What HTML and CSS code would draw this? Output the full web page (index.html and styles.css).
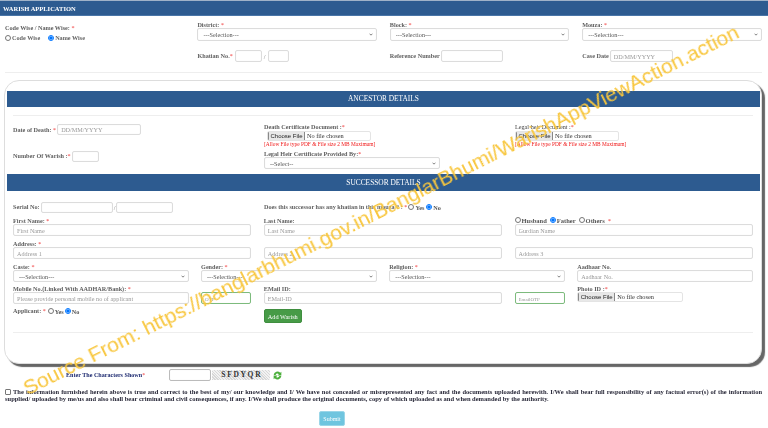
FILE: index.html
```html
<!DOCTYPE html>
<html lang="en">
<head>
<meta charset="utf-8">
<title>Warish Application</title>
<link rel="stylesheet" href="styles.css">
</head>
<body>
<div class="page">
  <div class="form-wrap">
    <header class="app-bar">WARISH APPLICATION</header>
    <section class="top-grid">
      <div class="field">
        <label>Code Wise / Name Wise: <i>*</i></label>
        <div class="radios top-radios">
          <input type="radio" name="mode"><span>Code Wise</span>
          <input type="radio" name="mode" checked class="gap-left"><span>Name Wise</span>
        </div>
      </div>
      <div class="field"><label>District: <i>*</i></label><select><option>---Selection---</option></select></div>
      <div class="field"><label>Block: <i>*</i></label><select><option>---Selection---</option></select></div>
      <div class="field"><label>Mouza: <i>*</i></label><select><option>---Selection---</option></select></div>
      <div></div>
      <div class="inline"><label>Khatian No.<i>*</i></label><input class="w-khatian1" type="text"><span class="sep">/</span><input class="w-khatian2" type="text"></div>
      <div class="inline"><label>Reference Number</label><input class="w-ref" type="text"></div>
      <div class="inline"><label>Case Date</label><input class="w-date" type="text" placeholder="DD/MM/YYYY"></div>
    </section>
    <hr class="rule top-rule">

    <section class="card">
      <h2 class="bar">ANCESTOR DETAILS</h2>
      <hr class="rule inner-rule">
      <div class="ancestor-grid">
        <div class="inline date-death"><label>Date of Death: <i>*</i></label><input class="w-death" type="text" placeholder="DD/MM/YYYY"></div>
        <div class="doc doc-indent">
          <label>Death Certificate Document :<i>*</i></label>
          <input type="file">
          <small>[Allow File type PDF &amp; File size 2 MB Maximum]</small>
        </div>
        <div class="doc">
          <label class="plain">Legal heir Document :<i>*</i></label>
          <input type="file">
          <small>[Allow File type PDF &amp; File size 2 MB Maximum]</small>
        </div>
        <div class="inline warish-count"><label>Number Of Warish :<i>*</i></label><input class="w-count" type="text"></div>
        <div class="field heir-select"><label>Legal Heir Certificate Provided By:<i>*</i></label><select><option>--Select--</option></select></div>
      </div>

      <h2 class="bar bar-second">SUCCESSOR DETAILS</h2>
      <div class="serial-row">
        <div class="inline"><label>Serial No:</label><input class="w-serial1" type="text"><span class="sep sep-tight">/</span><input class="w-serial2" type="text"></div>
        <div class="inline khatian-q">
          <label>Does this successor has any khatian in this mouza ? : <i>*</i></label>
          <input type="radio" name="has"><b>Yes</b><input type="radio" name="has" checked><b>No</b>
        </div>
      </div>
      <div class="succ-grid">
        <div class="field s4"><label>First Name: <i>*</i></label><input type="text" placeholder="First Name"></div>
        <div class="field s4"><label>Last Name:</label><input type="text" placeholder="Last Name"></div>
        <div class="field s4">
          <div class="radios guardian">
            <input type="radio" name="g"><b>Husband</b><input type="radio" name="g" checked><b>Father</b><input type="radio" name="g"><b>Others</b><i>*</i>
          </div>
          <input type="text" placeholder="Gurdian Name">
        </div>

        <div class="field s4"><label>Address: <i>*</i></label><input type="text" placeholder="Address 1"></div>
        <div class="field s4"><input type="text" placeholder="Address 2"></div>
        <div class="field s4"><input type="text" placeholder="Address 3"></div>

        <div class="field s3"><label>Caste: <i>*</i></label><select><option>---Selection---</option></select></div>
        <div class="field s3"><label>Gender: <i>*</i></label><select><option>---Selection---</option></select></div>
        <div class="field s3"><label>Religion: <i>*</i></label><select><option>---Selection---</option></select></div>
        <div class="field s3"><label>Aadhaar No.</label><input type="text" placeholder="Aadhaar No."></div>

        <div class="field s3"><label>Mobile No.(Linked With AADHAR/Bank): <i>*</i></label><input type="text" placeholder="Please provide personal mobile no of applicant"></div>
        <div class="field s1"><input class="otp" type="text" placeholder="OTP"></div>
        <div class="field s4"><label>EMail ID:</label><input type="text" placeholder="EMail-ID"></div>
        <div class="field s1"><input class="otp" type="text" placeholder="EmailOTP"></div>
        <div class="field s3 photo"><label>Photo ID :<i>*</i></label><input type="file"></div>

        <div class="radios applicant s4"><label>Applicant: <i>*</i></label><input type="radio" name="ap"><span>Yes</span><input type="radio" name="ap" checked><span>No</span></div>
        <div class="s8"><button class="add-btn" type="button">Add Warish</button></div>
      </div>
      <hr class="rule bottom-rule">
    </section>

    <div class="captcha-row">
      <label class="captcha-label">Enter The Characters Shown<i>*</i></label>
      <input type="text">
      <div class="captcha-img">S F D Y Q R</div>
      <svg class="refresh" viewBox="0 0 20 20" aria-hidden="true">
        <path d="M3 9a7 7 0 0 1 12-4l2-2v7h-7l2.500-2.500A4 4 0 0 0 6.500 9z" fill="#4caf3c"/>
        <path d="M17 11a7 7 0 0 1-12 4l-2 2v-7h7l-2.500 2.500A4 4 0 0 0 13.500 11z" fill="#4caf3c"/>
      </svg>
    </div>

    <p class="declare"><input type="checkbox">The information furnished herein above is true and correct to the best of my/ our knowledge and I/ We have not concealed or misrepresented any fact and the documents uploaded herewith. I/We shall bear full responsibility of any factual error(s) of the information supplied/ uploaded by me/us and also shall bear criminal and civil consequences, if any. I/We shall produce the original documents, copy of which uploaded as and when demanded by the authority.</p>
    <div class="submit-row"><button class="submit" type="button">Submit</button></div>
  </div>
  <div class="watermark">Source From: https://banglarbhumi.gov.in/BanglarBhumi/WarishAppViewAction.action</div>
</div>
</body>
</html>
```

FILE: styles.css
```css
* { box-sizing: border-box; }
html, body { margin: 0; padding: 0; background: #fff; }
.page {
  position: relative;
  width: 768px;
  height: 428px;
  overflow: hidden;
  font-family: "Liberation Serif", serif;
  font-size: 6.2px;
  color: #555;
}
.form-wrap { filter: blur(0.35px); border-top: 1px solid #9fb2c8; }

label { font-weight: bold; line-height: 8px; display: block; white-space: nowrap; color: #5f5f5f; }
i { color: #f03030; font-style: normal; font-weight: normal; }
input[type=text], select {
  height: 12px;
  width: 100%;
  min-width: 0;
  margin: 0;
  padding: 0 3px;
  border: 1px solid #dcdcdc;
  border-radius: 2px;
  background: #fff;
  font: 6.2px "Liberation Serif", serif;
  color: #555;
  box-shadow: inset 0 0 1px rgba(0,0,0,.08);
}
select {
  appearance: none;
  padding: 0 5px;
  background-image: url("data:image/svg+xml,%3Csvg xmlns='http://www.w3.org/2000/svg' viewBox='0 0 6 4'%3E%3Cpath d='M.8.8 3 3l2.200-2.200' fill='none' stroke='%23444' stroke-width='1'/%3E%3C/svg%3E");
  background-repeat: no-repeat;
  background-position: right 3px center;
  background-size: 4px 3px;
}
input::placeholder { color: #999; opacity: 1; }
input[type=radio], input[type=checkbox] { width: 6px; height: 6px; margin: 0; flex: none; }
input[type=file] {
  display: block;
  width: 104px;
  height: 10px;
  margin: 0;
  border: 1px solid #e4e4e4;
  border-radius: 2px;
  font: 6.300px/8px "Liberation Serif", serif;
  color: #333;
  overflow: hidden;
}
input[type=file]::file-selector-button {
  width: 37px;
  height: 10px;
  padding: 0;
  margin: -1px 2px 0 0;
  font: 6px "Liberation Sans", sans-serif;
  color: #222;
  background: #e8e8e8;
  border: 1px solid #888;
  border-radius: 1px;
}

.app-bar {
  height: 15px;
  background: #2d5b90;
  border-bottom: 1px solid #4a76a8;
  color: #fff;
  font-weight: bold;
  font-size: 6.500px;
  line-height: 15px;
  padding-left: 3px;
}
.top-grid {
  display: grid;
  grid-template-columns: repeat(4, 179.500px);
  column-gap: 12.900px;
  row-gap: 9px;
  padding: 5px 0 0 5px;
}
.field { display: flex; flex-direction: column; justify-content: flex-end; min-width: 0; }
.field label { line-height: 7px; }
.top-grid select { height: 13px; }
.inline { display: flex; align-items: center; gap: 1px; height: 12px; }
.sep { padding: 0 1px; color: #777; }
.sep-tight { padding: 0; }
.radios { display: flex; align-items: center; gap: 1px; font-weight: bold; }
.top-radios { margin-top: 3px; color: #666; }
.gap-left { margin-left: 7px !important; }
.w-khatian1 { width: 27px !important; margin-left: 1px !important; }
.w-khatian2 { width: 21px !important; }
.w-ref { width: 62px !important; }
.w-date { width: 63px !important; }
.w-death { width: 84px !important; height: 11px !important; }
.w-count { width: 27px !important; height: 11px !important; }
.w-serial1 { width: 72px !important; height: 11px !important; }
.w-serial2 { width: 57px !important; height: 11px !important; }

.rule { border: 0; border-top: 1px solid #eee; margin: 0; }
.top-rule { margin: 10px 6px 0 5px; }

.card {
  margin: 7px 0 0 4px;
  width: 758px;
  height: 284px;
  padding-top: 10px;
  background: #fff;
  border: 1px solid #ddd;
  border-radius: 15px;
  box-shadow: 3px 3px 1px #666;
}
.bar {
  margin: 0 1px 0 2px;
  height: 16px;
  background: #2d5b90;
  color: #fff;
  font-size: 7.400px;
  font-weight: normal;
  line-height: 16px;
  text-align: center;
}
.bar-second { height: 17px; line-height: 17px; }
.inner-rule { margin: 8px 8px 0 8px; }

.ancestor-grid {
  display: grid;
  grid-template-columns: 238px 238px 238px;
  column-gap: 13px;
  grid-template-rows: 27px 22px;
  margin: 7px 0 2px 8px;
}
.date-death { height: 11px; align-self: start; margin-top: 1px; }
.doc label { font-weight: bold; line-height: 8px; }
.doc label.plain { font-weight: normal; color: #444; }
.doc small { display: block; font-size: 5.400px; line-height: 7px; color: #f01818; white-space: nowrap; }
.doc-indent input[type=file] { margin-left: 3px; }
.warish-count { align-self: start; margin-top: 0; }
.heir-select select { width: 176px; height: 12px; }
.heir-select { justify-content: flex-start; }

.serial-row {
  display: grid;
  grid-template-columns: 238px 489px;
  column-gap: 13px;
  margin: 10px 0 0 8px;
}
.khatian-q { gap: 1px; }
.khatian-q b { margin-right: 1px; color: #555; }

.succ-grid {
  display: grid;
  grid-template-columns: repeat(12, 50.200px);
  column-gap: 12.500px;
  grid-template-rows: 20px 20px 20px 19px auto;
  row-gap: 3px;
  margin: 3px 0 0 8px;
  align-items: end;
}
.s1 { grid-column: span 1; }
.s3 { grid-column: span 3; }
.s4 { grid-column: span 4; }
.s8 { grid-column: span 8; }
.guardian { height: 8px; color: #555; font-size: 6.500px; }
.guardian b { margin-right: 2px; }
.otp { border: 1px solid #7dbb7d !important; }
.otp::placeholder { font-size: 5px; }
.photo { align-self: start; }
.photo input[type=file] { width: 106px; margin-top: 0; }
.applicant { align-self: start; }
.applicant label { margin-right: 1px; }
.add-btn {
  display: block;
  width: 38px;
  height: 14px;
  padding: 0;
  margin: 2px 0 0;
  background: #479b47;
  border: 1px solid #3f8e3f;
  border-radius: 2px;
  color: #fff;
  font: 6.300px "Liberation Serif", serif;
}
.bottom-rule { margin: 9px 8px 0 8px; }

.captcha-row {
  display: flex;
  align-items: center;
  height: 12px;
  margin-top: 5px;
  padding-left: 66px;
}
.captcha-label { width: 103px; color: #1d2a70; font-size: 6.100px; }
.captcha-row input[type=text] { width: 42px; height: 12px; border: 1px solid #bbb; }
.captcha-img {
  width: 58px;
  height: 10px;
  margin-left: 1px;
  background: repeating-linear-gradient(45deg, #d8d8d8 0 1px, #f2f2f2 1px 2px);
  color: #333;
  font: bold 7.500px/10px "Liberation Serif", serif;
  text-align: center;
}
.refresh { width: 11px; height: 11px; margin-left: 2px; }

.declare {
  margin: 7px 6px 0 5px;
  font-size: 6.500px;
  line-height: 7px;
  font-weight: bold;
  color: #2a2a3a;
  text-align: justify;
}
.declare input {
  appearance: none;
  margin-right: 2px;
  vertical-align: -1px;
  background: #fff;
  border: 1px solid #777;
  border-radius: 1px;
}
.submit-row { display: flex; justify-content: center; margin-top: 9px; padding-right: 104px; padding-left: 0; }
.submit {
  width: 26px;
  height: 15px;
  padding: 0;
  margin: 0;
  background: #6fc5df;
  border: 1px solid #9bd6e8;
  border-radius: 2px;
  color: #fff;
  font: 6px "Liberation Serif", serif;
}

.watermark {
  position: absolute;
  left: 381px;
  top: 210px;
  transform: translate(-50%, -50%) rotate(-26.700deg);
  white-space: nowrap;
  font-family: "Liberation Sans", sans-serif;
  font-size: 21.100px;
  color: #f8c63c;
}
```
